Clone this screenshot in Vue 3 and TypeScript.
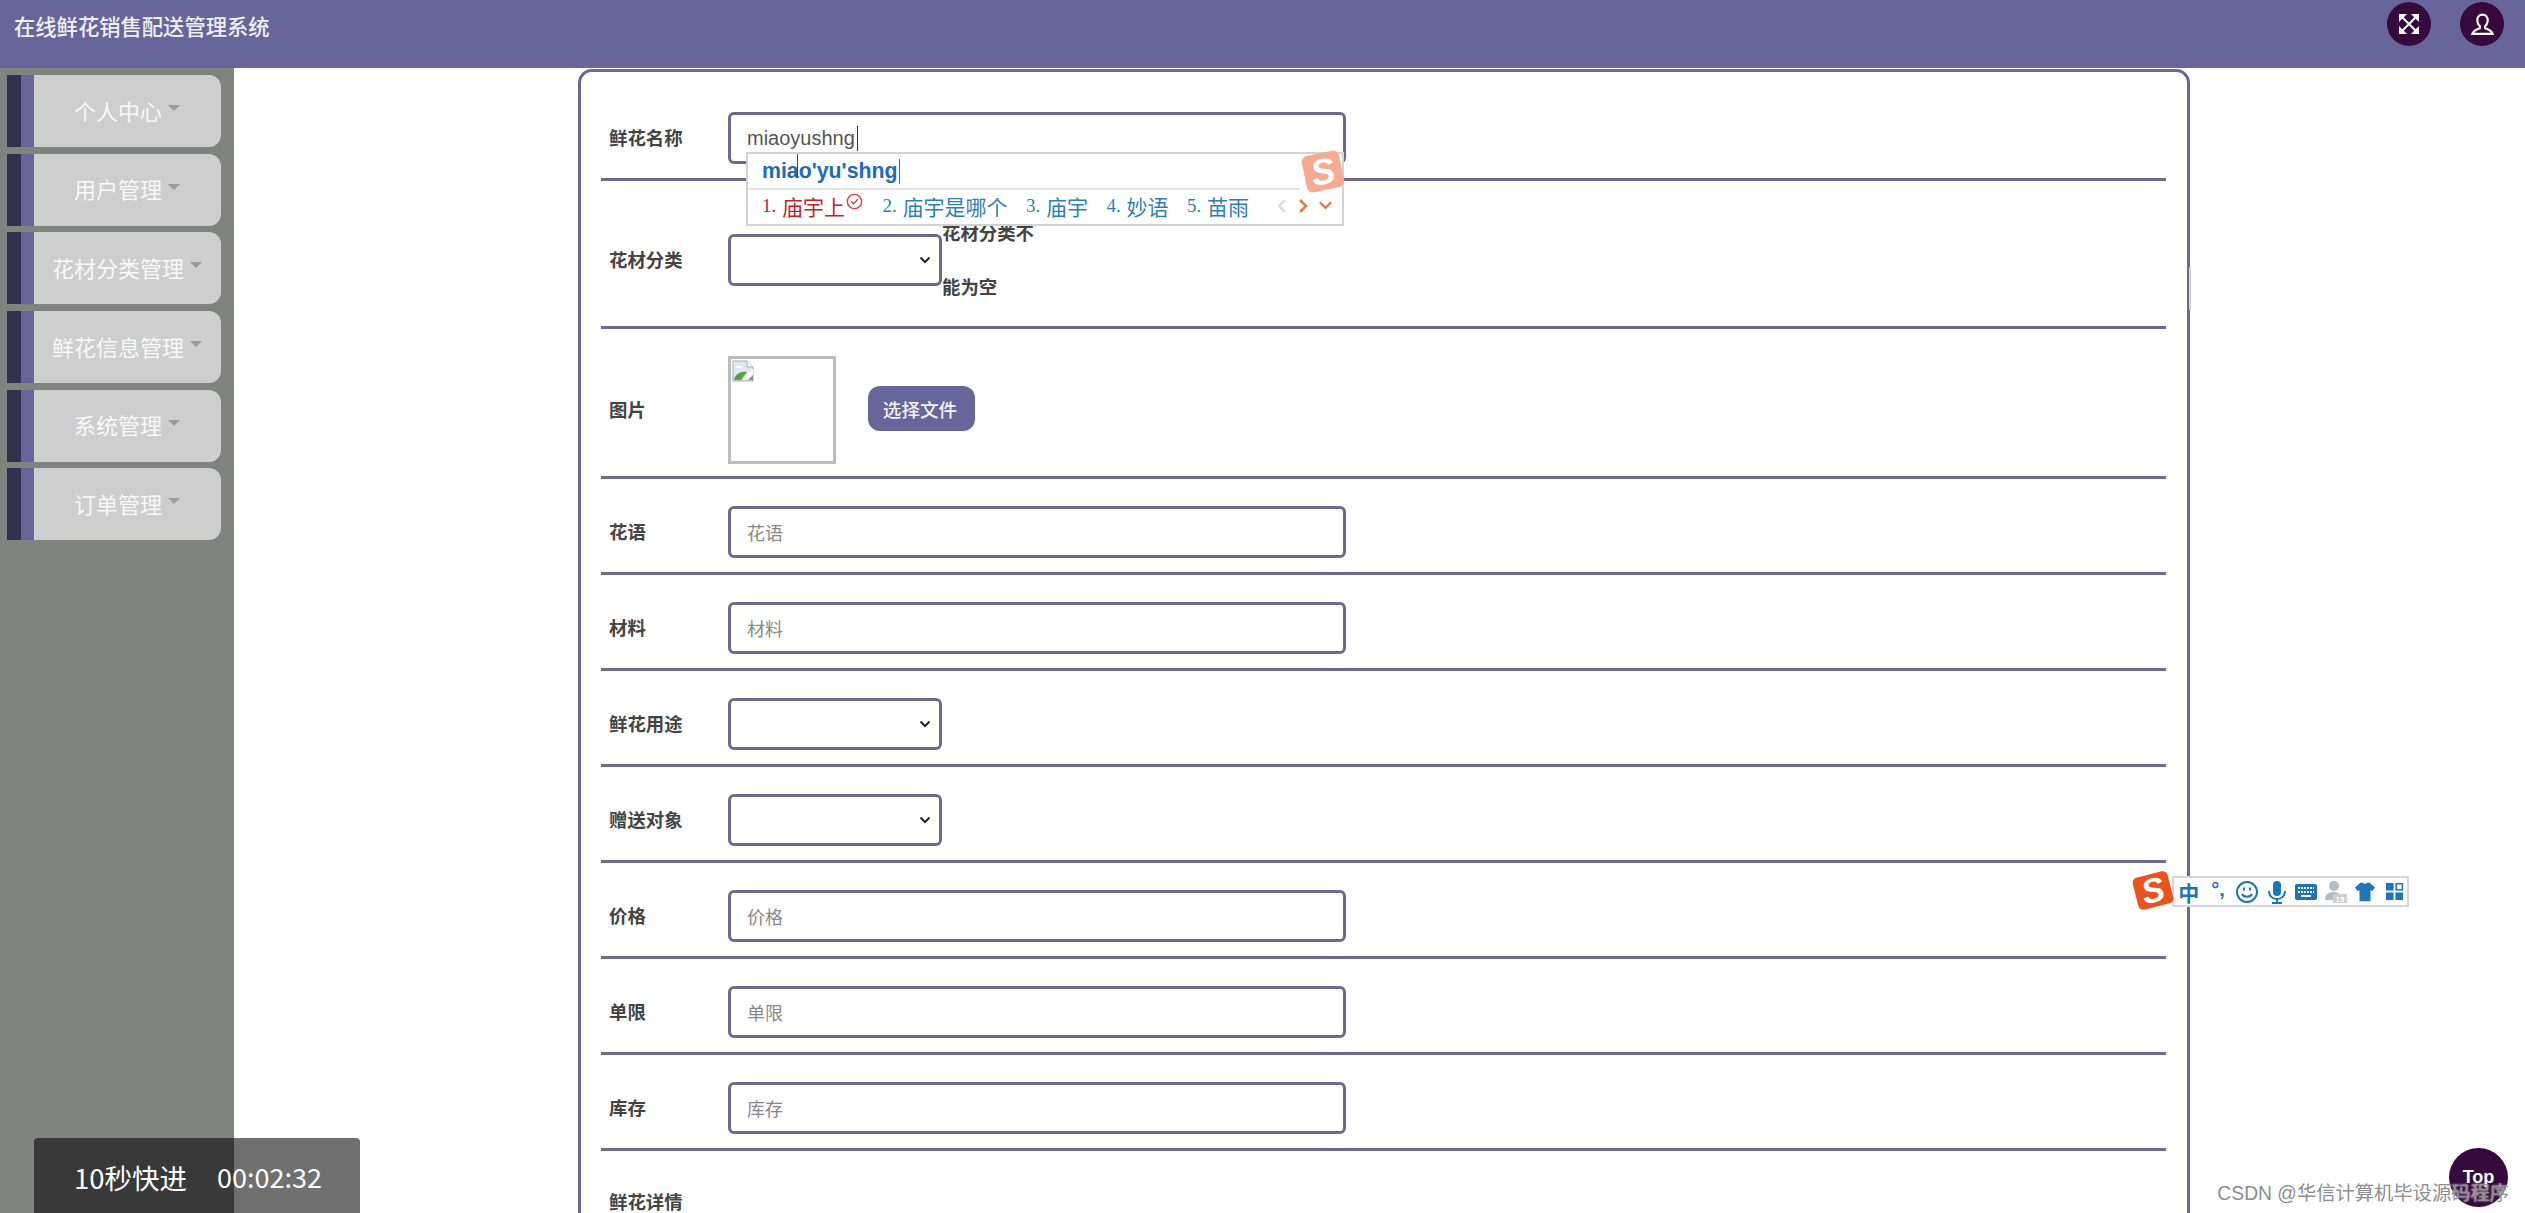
<script setup lang="ts">
const menu: string[] = ['个人中心', '用户管理', '花材分类管理', '鲜花信息管理', '系统管理', '订单管理']
const candidates: { n: string; t: string }[] = [
  { n: '2.', t: '庙宇是哪个' },
  { n: '3.', t: '庙宇' },
  { n: '4.', t: '妙语' },
  { n: '5.', t: '苗雨' },
]
const upper: string[] = ['花语', '材料']
const selects: string[] = ['鲜花用途', '赠送对象']
const lower: string[] = ['价格', '单限', '库存']
</script>

<template>
  <div class="page">
    <header class="top">
      <div class="title">在线鲜花销售配送管理系统</div>
      <div class="top-actions">
        <span class="round">
          <svg viewBox="0 0 24 24" width="24" height="24" fill="none" stroke="#fff" stroke-width="2">
            <path d="M5 5l14 14M19 5L5 19" />
            <path d="M2 2h8l-8 8zM22 2h-8l8 8zM2 22h8l-8-8zM22 22h-8l8-8z" fill="#fff" stroke="none" />
          </svg>
        </span>
        <span class="round">
          <svg viewBox="0 0 24 24" width="25" height="25" fill="none" stroke="#fff" stroke-width="2">
            <path d="M12 2.500c-3 0-5 2.300-5 5.500 0 2.500 1.200 4.600 2.600 5.700v1.700c-1.500 1-6 1.600-7.300 5.600h19.400c-1.300-4-5.800-4.600-7.300-5.600v-1.700c1.400-1.100 2.600-3.200 2.600-5.700 0-3.200-2-5.500-5-5.500z" />
          </svg>
        </span>
      </div>
    </header>

    <div class="body">
      <aside class="side">
        <div v-for="m in menu" :key="m" class="item">
          <i class="strip-dark"></i>
          <i class="strip-purple"></i>
          <div class="item-face">
            <span>{{ m }}</span>
            <i class="tri"></i>
          </div>
        </div>
      </aside>

      <main class="main">
        <form class="card" @submit.prevent>
          <div class="row">
            <label class="lab">鲜花名称</label>
            <input class="inp typed" type="text" value="miaoyushng" />
          </div>
          <div class="row row-err">
            <label class="lab">花材分类</label>
            <select class="sel"><option></option></select>
            <div class="err">花材分类不能为空</div>
          </div>
          <div class="row row-img">
            <label class="lab">图片</label>
            <div class="imgbox">
              <svg class="broken" viewBox="0 0 22 22" width="22" height="22">
                <path d="M1 1h14l6 6v14H1z" fill="#dfe8f7" stroke="#a9a9a9" />
                <path d="M15 1v6h6" fill="#fff" stroke="#a9a9a9" />
                <path d="M3 8c2-3 6-3 8 0z" fill="#fff" />
                <path d="M2 20c1-6 7-9 13-8l-6 8z" fill="#5aa23c" />
                <path d="M21 9L11 20h10z" fill="#fff" />
                <path d="M16 20l5-5v5z" fill="#7d9a70" />
              </svg>
            </div>
            <button class="pick" type="button">选择文件</button>
          </div>
          <div v-for="u in upper" :key="u" class="row">
            <label class="lab">{{ u }}</label>
            <input class="inp" type="text" :placeholder="u" />
          </div>
          <div v-for="s in selects" :key="s" class="row">
            <label class="lab">{{ s }}</label>
            <select class="sel"><option></option></select>
          </div>
          <div v-for="l in lower" :key="l" class="row">
            <label class="lab">{{ l }}</label>
            <input class="inp" type="text" :placeholder="l" />
          </div>
          <div class="row row-last">
            <label class="lab">鲜花详情</label>
          </div>
        </form>
      </main>
    </div>

    <i class="text-caret"></i>
    <i class="edge-ghost"></i>

    <div class="ime">
      <div class="ime-top">
        <span class="pinyin">miao'yu'shng</span><i class="ime-caret"></i>
      </div>
      <div class="ime-list">
        <span class="cand first">
          <b class="num">1.</b>庙宇上
          <svg viewBox="0 0 20 20" width="19" height="19" class="tick" fill="none" stroke="#d2453f" stroke-width="1.500">
            <circle cx="10" cy="10" r="7.500" />
            <path d="M6.500 10l2.500 2.500 4.500-5" />
          </svg>
        </span>
        <span v-for="c in candidates" :key="c.n" class="cand"><b class="num">{{ c.n }}</b>{{ c.t }}</span>
        <span class="ime-nav">
          <svg viewBox="0 0 12 16" width="12" height="16" fill="none" stroke="#dcdcdc" stroke-width="2.500"><path d="M9 2L3 8l6 6" /></svg>
          <svg viewBox="0 0 12 16" width="12" height="16" fill="none" stroke="#e8743f" stroke-width="2.500"><path d="M3 2l6 6-6 6" /></svg>
          <svg viewBox="0 0 16 12" width="15" height="12" fill="none" stroke="#e8743f" stroke-width="2.500"><path d="M2 2l6 6 6-6" /></svg>
        </span>
      </div>
      <span class="ime-logo">S</span>
      <i class="ibeam"></i>
    </div>

    <div class="sogou">
      <span class="sogou-logo">S</span>
      <span class="cell zh">中</span>
      <span class="cell punct">°,</span>
      <span class="cell">
        <svg viewBox="0 0 24 24" width="24" height="24" fill="none" stroke="#1f74b8" stroke-width="2">
          <circle cx="12" cy="12" r="10" />
          <path d="M7 14c1.500 3.500 8.500 3.500 10 0" />
          <path d="M9 7.500v3M15 7.500v3" />
        </svg>
      </span>
      <span class="cell">
        <svg viewBox="0 0 24 24" width="24" height="26" fill="#1f74b8">
          <rect x="8" y="1" width="8" height="15" rx="4" />
          <path d="M4 11c0 5 3.500 8 8 8s8-3 8-8" fill="none" stroke="#1f74b8" stroke-width="2" />
          <path d="M11 19h2v3h4v2H7v-2h4z" />
        </svg>
      </span>
      <span class="cell">
        <svg viewBox="0 0 24 18" width="24" height="18">
          <rect x="1" y="1" width="22" height="16" rx="2" fill="#1f74b8" />
          <path d="M4 5h16M4 9h16" stroke="#fff" stroke-width="2" stroke-dasharray="2 1" />
          <path d="M7 13h10" stroke="#fff" stroke-width="2" />
        </svg>
      </span>
      <span class="cell">
        <svg viewBox="0 0 24 24" width="24" height="24">
          <circle cx="10" cy="6" r="5" fill="#b5bcc4" />
          <path d="M1 20c0-6 4-8 9-8 3 0 5 1 6 3H9v5z" fill="#b5bcc4" />
          <rect x="9" y="14" width="14" height="9" fill="#c9cdd2" />
          <text x="16" y="22" font-size="8" font-weight="700" fill="#fff" text-anchor="middle" font-family="Liberation Sans, sans-serif">15</text>
        </svg>
      </span>
      <span class="cell">
        <svg viewBox="0 0 24 24" width="22" height="22" fill="#1f74b8">
          <path d="M7 2h3c.5 1.500 3.500 1.500 4 0h3l6 5-3 4-2-1v12H6V10l-2 1-3-4z" />
        </svg>
      </span>
      <span class="cell">
        <svg viewBox="0 0 20 20" width="19" height="19" fill="#1f74b8">
          <rect x="1" y="1" width="8" height="8" />
          <rect x="11.800" y="1.800" width="6.500" height="6.500" fill="none" stroke="#1f74b8" stroke-width="1.600" />
          <rect x="1" y="11" width="8" height="8" />
          <rect x="11" y="11" width="8" height="8" />
        </svg>
      </span>
    </div>

    <div class="to-top">Top</div>
    <div class="mark">CSDN @华信计算机毕设源码程序</div>
    <div class="toast"><span class="t1">10秒快进</span><span class="t2">00:02:32</span></div>
  </div>
</template>

<style>
html, body { margin: 0; padding: 0; background: #fff; overflow: hidden; }
</style>

<style scoped>
.page {
  position: relative;
  height: 100vh;
  overflow: hidden;
  display: flex;
  flex-direction: column;
  font-family: "Noto Sans CJK SC", "Liberation Sans", sans-serif;
  color: #444;
}
.top {
  flex: none;
  height: 68px;
  background: #67659a;
  display: flex;
  justify-content: space-between;
  padding: 0 21px 0 14px;
  box-sizing: border-box;
}
.title { margin-top: 8px; font-size: 21.300px; line-height: 36px; color: #f0f0f2; font-weight: 500; }
.top-actions { display: flex; gap: 29px; padding-top: 2px; }
.round {
  width: 44px; height: 44px; border-radius: 50%;
  background: #360a3c;
  display: flex; align-items: center; justify-content: center;
}
.body { flex: 1; display: flex; min-height: 0; }
.side {
  flex: none;
  width: 234px;
  background: #81837f;
  padding: 7px 13px 0 7px;
  box-sizing: border-box;
  display: flex;
  flex-direction: column;
  gap: 6.700px;
}
.item { display: flex; height: 72px; }
.strip-dark { width: 14px; background: #33314f; }
.strip-purple { width: 13px; background: #67659a; }
.item-face {
  flex: 1;
  background: #cdcecd;
  border-radius: 0 12px 12px 0;
  display: flex;
  align-items: center;
  justify-content: center;
  gap: 6px;
  padding-bottom: 3px;
  padding-right: 1px;
  box-sizing: border-box;
  color: #f8f8f8;
  font-size: 22px;
}
.tri {
  width: 0; height: 0;
  border-left: 6.500px solid transparent;
  border-right: 6.500px solid transparent;
  border-top: 6px solid #9b9b9b;
  margin-bottom: 3px;
}
.main { flex: 1; min-width: 0; }
.card {
  margin: 1px 0 0 344px;
  width: 1612px;
  box-sizing: border-box;
  border: 3px solid #6c6a94;
  border-radius: 14px;
  padding: 13px 21px 200px 20px;
  background: #fff;
}
.row {
  display: flex;
  align-items: center;
  padding: 27px 0 14px 8px;
  border-bottom: 3px solid #6c6a94;
}
.row-err { padding: 26px 0 13px 8px; }
.row-img { padding: 27px 0 12px 8px; }
.row-last { border-bottom: 0; padding-top: 41px; padding-bottom: 0; }
.lab { flex: none; width: 119px; font-size: 18.400px; line-height: 26px; font-weight: 700; color: #444; margin-top: -2px; }
.row-last .lab { line-height: 18px; margin-top: 0; }
.inp, .sel {
  height: 52px;
  box-sizing: border-box;
  border: 3px solid #6c6a94;
  border-radius: 6px;
  background-color: #fff;
  outline: none;
}
.inp {
  width: 618px;
  padding: 0 16px;
  font-size: 18px;
  color: #555;
  font-family: "Noto Sans CJK SC", "Liberation Sans", sans-serif;
}
.inp::placeholder { color: #888; opacity: 1; }
.typed { font-family: "Liberation Sans", sans-serif; font-size: 20px; }
.sel {
  width: 214px;
  appearance: none;
  background-image: url("data:image/svg+xml,%3Csvg xmlns='http://www.w3.org/2000/svg' viewBox='0 0 12 8'%3E%3Cpath d='M1.500 1.500L6 6l4.500-4.500' fill='none' stroke='%23222' stroke-width='2'/%3E%3C/svg%3E");
  background-repeat: no-repeat;
  background-size: 12px 8px;
  background-position: right 8px center;
}
.err { width: 100px; font-size: 18.400px; line-height: 54px; font-weight: 700; color: #444; margin-top: -2px; }
.imgbox {
  position: relative;
  width: 108px; height: 108px;
  box-sizing: border-box;
  border: 3px solid #bcbcbc;
}
.broken { position: absolute; left: 1px; top: 1px; }
.pick {
  margin-left: 32px;
  width: 107px; height: 45px;
  margin-top: -4px;
  border: 0;
  border-radius: 12px;
  background: #67659a;
  color: #f3f3f7;
  font: 500 18.600px "Noto Sans CJK SC", sans-serif;
  padding: 0 3px 0 0;
  box-sizing: border-box;
}
.text-caret { position: absolute; left: 857px; top: 126px; width: 1px; height: 25px; background: #333; }
.edge-ghost { position: absolute; left: 2189px; top: 267px; width: 2px; height: 43px; background: #d0d0e6; }
.ime {
  position: absolute;
  left: 746px; top: 152px;
  width: 598px; height: 74px;
  box-sizing: border-box;
  border: 2px solid #d2d2d2;
  background: #fff;
}
.ime-top {
  height: 34px;
  margin-right: 42px;
  border-bottom: 2px solid #e4e4e4;
  padding-left: 14px;
  display: flex;
  align-items: center;
}
.pinyin { font: 700 21.300px "Liberation Sans", sans-serif; color: #1d6bbd; }
.ime-caret { width: 1px; height: 25px; background: #d0312d; margin-left: 1px; }
.ime-list {
  display: flex;
  align-items: center;
  gap: 18.500px;
  height: 32px;
  padding-left: 14px;
  font-size: 21px;
  color: #2e7fb5;
  white-space: nowrap;
}
.cand { display: flex; align-items: center; line-height: 30px; }
.first { color: #c0262b; }
.num { width: 20px; font: 400 19px "Liberation Serif", serif; }
.tick { margin-top: -9px; }
.ime-nav { position: absolute; right: 9px; top: 44px; display: flex; align-items: center; gap: 9px; }
.ime-logo {
  position: absolute;
  right: 0; top: -1px;
  width: 38px; height: 37px;
  border-radius: 6px;
  background: #f4ab92;
  color: #fff;
  font: italic 700 36px/37px "Liberation Sans", sans-serif;
  text-align: center;
  transform: rotate(-12deg);
}
.ibeam { position: absolute; left: 49px; top: 0; width: 1px; height: 22px; background: #444; }
.sogou {
  position: absolute;
  left: 2172px; top: 876px;
  width: 237px; height: 31px;
  box-sizing: border-box;
  border: 2px solid #d4d6dc;
  background: #fff;
  display: flex;
  align-items: center;
  padding-left: 0;
}
.sogou-logo {
  position: absolute;
  left: -39px; top: -4px;
  width: 36px; height: 33px;
  border-radius: 5px;
  background: #e9531e;
  color: #fff;
  font: italic 700 34px/33px "Liberation Sans", sans-serif;
  text-align: center;
  transform: rotate(-14deg);
}
.cell {
  flex: none;
  width: 29.400px;
  height: 100%;
  display: flex;
  align-items: center;
  justify-content: center;
  color: #1f74b8;
}
.zh { font-size: 21px; font-weight: 700; }
.punct { font: 700 20px/20px "Liberation Sans", sans-serif; padding-bottom: 6px; box-sizing: border-box; }
.to-top {
  position: absolute;
  right: 17px; top: 1148px;
  width: 59px; height: 59px;
  border-radius: 50%;
  background: #360a3c;
  color: #fff;
  font: 700 18px/59px "Liberation Sans", sans-serif;
  text-align: center;
}
.mark {
  position: absolute;
  right: 16px; top: 1181px;
  font: 400 19.300px/26px "Liberation Sans", "Noto Sans CJK SC", sans-serif;
  color: #8e8e8e;
  text-shadow: 0 0 2px #fff;
  white-space: nowrap;
}
.toast {
  position: absolute;
  left: 34px; top: 1138px;
  width: 326px; height: 75px;
  border-radius: 4px 4px 0 0;
  background: rgba(0, 0, 0, 0.56);
  color: #fff;
  display: flex;
  align-items: center;
  padding: 2px 0 0 40px;
  box-sizing: border-box;
  gap: 30px;
}
.t1 { font-size: 27.500px; }
.t2 { font-size: 27px; }
</style>
